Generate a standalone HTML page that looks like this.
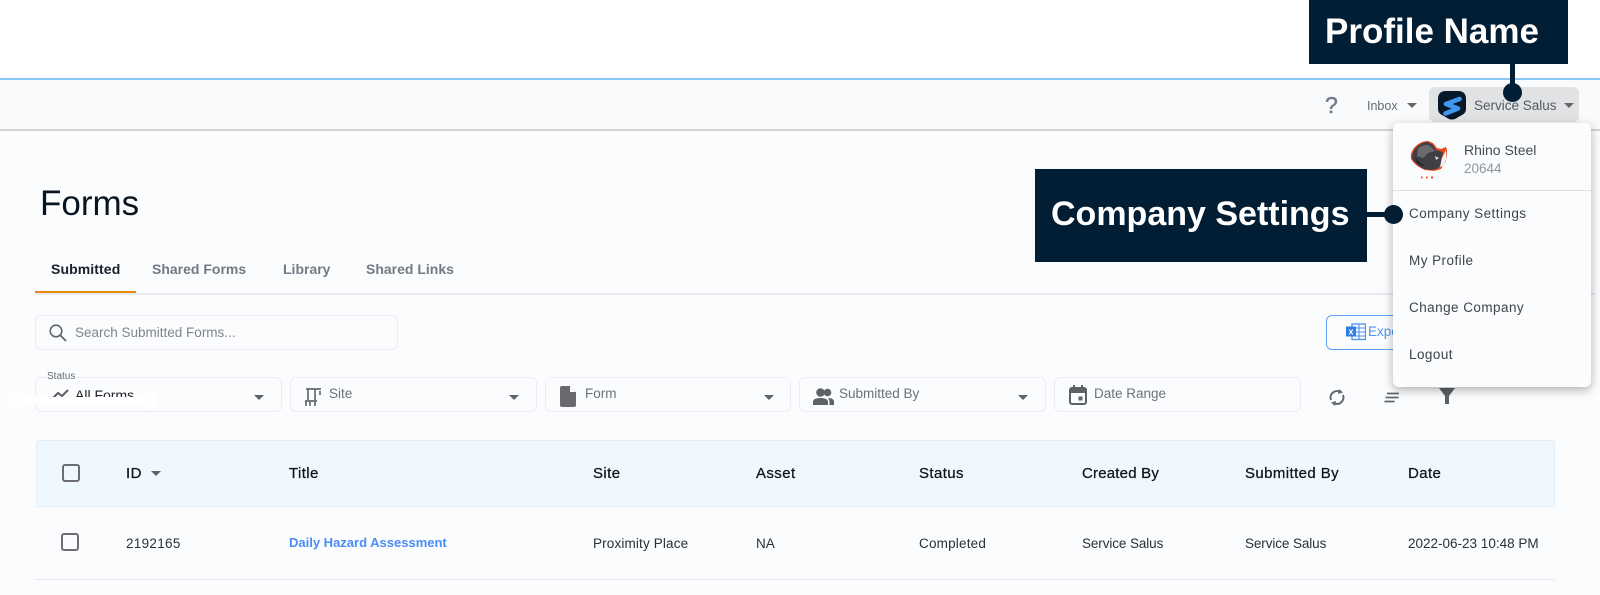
<!DOCTYPE html>
<html><head><meta charset="utf-8">
<style>
*{box-sizing:border-box;margin:0;padding:0}
html,body{width:1600px;height:595px;overflow:hidden;background:#fbfcfe;font-family:"Liberation Sans",sans-serif}
.a{position:absolute;white-space:nowrap}
.t{position:absolute;white-space:nowrap;line-height:20px;height:20px}
.box{position:absolute;border:1.5px solid #ebedf0;border-radius:6px;background:#fbfcfe}
.caret{position:absolute;width:0;height:0;border-left:5px solid transparent;border-right:5px solid transparent;border-top:5px solid #5f6368}
.f{font-size:13.5px;color:#6b7178}
.h{font-size:15px;color:#10151c;top:464px;letter-spacing:.4px;-webkit-text-stroke:.25px #10151c}
.r{font-size:13.5px;color:#2b3036;top:534px}
.m{font-size:13.5px;color:#3f4347;left:1409px;letter-spacing:.45px}
.cb{position:absolute;width:18px;height:18px;border:2px solid #6d6e73;border-radius:3px}
.cap{position:absolute;background:#021e34;color:#fff;font-weight:bold;line-height:1}
</style></head><body>
<div class="a" style="left:0;top:0;width:1600px;height:78px;background:#fff"></div>
<div class="a" style="left:0;top:78px;width:1600px;height:2px;background:#8cc6f2"></div>
<div class="a" style="left:0;top:80px;width:1600px;height:51px;background:#f9fafc;border-bottom:2px solid #d2d3d5"></div>

<div class="t" style="left:1325px;top:94px;font-size:23px;color:#6f7d8a;height:22px;line-height:22px;-webkit-text-stroke:.5px #6f7d8a">?</div>
<div class="t f" style="left:1367px;top:96px;font-size:12.5px;color:#666b70">Inbox</div>
<div class="caret" style="left:1407px;top:103px;border-top-color:#666"></div>
<div class="a" style="left:1429px;top:87px;width:150px;height:35px;background:#e1e2e4;border-radius:6px"></div>
<svg class="a" style="left:1437px;top:90px" width="30" height="30" viewBox="0 0 30 30"><path d="M9 1h12q8 0 8 8v10q0 4-4 6l-7 4q-3 1-6 0l-7-4q-4-2-4-6V9q0-8 8-8z" fill="#08182b"/><path d="M22.500 9L9 14l12 4.500L8.500 23.500" fill="none" stroke="#3f97ee" stroke-width="4.600" stroke-linejoin="round" stroke-linecap="round"/></svg>
<div class="t" style="left:1474px;top:96px;font-size:13.5px;color:#55595e">Service Salus</div>
<div class="caret" style="left:1564px;top:103px;border-top-color:#666"></div>

<div class="t" style="left:40px;top:184px;font-size:35px;color:#08141f;height:40px;line-height:40px">Forms</div>
<div class="t" style="left:51px;top:259px;font-size:14px;font-weight:bold;color:#17202c;letter-spacing:.1px">Submitted</div>
<div class="t" style="left:152px;top:259px;font-size:14px;font-weight:bold;color:#717b85">Shared Forms</div>
<div class="t" style="left:283px;top:259px;font-size:14px;font-weight:bold;color:#717b85">Library</div>
<div class="t" style="left:366px;top:259px;font-size:14px;font-weight:bold;color:#717b85">Shared Links</div>
<div class="a" style="left:35px;top:293px;width:1560px;height:2px;background:#e6e8eb"></div>
<div class="a" style="left:35px;top:291px;width:101px;height:2px;background:#e98a10"></div>

<div class="box" style="left:35px;top:315px;width:363px;height:35px"></div>
<svg class="a" style="left:48px;top:323px" width="20" height="20" viewBox="0 0 20 20"><circle cx="8" cy="8" r="5.800" fill="none" stroke="#62666b" stroke-width="1.600"/><path d="M12.300 12.300L18 18" stroke="#62666b" stroke-width="1.800"/></svg>
<div class="t f" style="left:75px;top:323px;color:#80858b">Search Submitted Forms...</div>

<div class="a" style="left:1326px;top:315px;width:90px;height:35px;border:1.5px solid #5ea3f5;border-radius:6px"></div>
<svg class="a" style="left:1346px;top:323px" width="20" height="18" viewBox="0 0 20 18"><rect x="6" y="1" width="13.500" height="15.500" fill="none" stroke="#4b94ee" stroke-width="1.300"/><path d="M6 5h13.500M6 9h13.500M6 13h13.500M13 1v15.500" stroke="#4b94ee" stroke-width="1.100"/><rect x="0" y="3.500" width="10" height="10" fill="#2f7fe0"/><text x="2.500" y="11.500" font-size="9" font-weight="bold" fill="#fff" font-family="Liberation Sans, sans-serif">x</text></svg>
<div class="t" style="left:1368px;top:322px;font-size:13.5px;color:#4f96f2">Export</div>

<!-- filters -->
<div class="box" style="left:35px;top:377px;width:247px;height:35px"></div>
<div class="t" style="left:46px;top:367px;font-size:10px;color:#666c72;background:#fbfcfe;padding:0 1px;height:12px;line-height:20px;overflow:visible">Status</div>
<svg class="a" style="left:52px;top:389px" width="20" height="12" viewBox="0 0 20 12"><path d="M1 9l5-5 4 3 6-6" fill="none" stroke="#5c6065" stroke-width="2"/></svg>
<div class="t f" style="left:75px;top:385px;color:#1d2227;font-size:14px">All Forms</div>
<div class="caret" style="left:254px;top:395px"></div>

<div class="box" style="left:290px;top:377px;width:247px;height:35px"></div>
<svg class="a" style="left:304px;top:387px" width="18" height="20" viewBox="0 0 18 20"><path d="M2 2h15M4 2v11M11 2v11M1 14h12M2 14v5M6 14v5M11 14v5M16 4v4" fill="none" stroke="#666a6f" stroke-width="1.700"/></svg>
<div class="t f" style="left:329px;top:384px">Site</div>
<div class="caret" style="left:509px;top:395px"></div>

<div class="box" style="left:545px;top:377px;width:246px;height:35px"></div>
<svg class="a" style="left:560px;top:386px" width="16" height="21" viewBox="0 0 16 21"><path d="M2 0h8l6 6v13q0 2-2 2H2q-2 0-2-2V2q0-2 2-2z" fill="#696a6e"/><path d="M10 0v6h6z" fill="#fbfcfe"/></svg>
<div class="t f" style="left:585px;top:384px">Form</div>
<div class="caret" style="left:764px;top:395px"></div>

<div class="box" style="left:799px;top:377px;width:247px;height:35px"></div>
<svg class="a" style="left:813px;top:388px" width="21" height="17" viewBox="0 0 21 17"><circle cx="7.500" cy="4.500" r="4.300" fill="#5e6267"/><circle cx="14.500" cy="4.500" r="3.800" fill="#5e6267"/><path d="M0 17v-3q0-4 7.500-4t7.500 4v3zM16.500 17v-3q0-2-1.500-4 6 0 6 4v3z" fill="#5e6267"/></svg>
<div class="t f" style="left:839px;top:384px">Submitted By</div>
<div class="caret" style="left:1018px;top:395px"></div>

<div class="box" style="left:1054px;top:377px;width:247px;height:35px"></div>
<svg class="a" style="left:1069px;top:385px" width="18" height="20" viewBox="0 0 18 20"><rect x="1" y="3" width="16" height="16" rx="2" fill="none" stroke="#5d6166" stroke-width="2"/><rect x="1" y="3" width="16" height="5" fill="#5d6166"/><path d="M5 0v4M13 0v4" stroke="#5d6166" stroke-width="2"/><rect x="9.500" y="11.500" width="4" height="4" fill="#5d6166"/></svg>
<div class="t f" style="left:1094px;top:384px">Date Range</div>

<svg class="a" style="left:1329px;top:389px" width="16" height="17" viewBox="0 0 16 17"><path d="M2 11A6.500 6.500 0 0 1 11 2.800M14 6A6.500 6.500 0 0 1 5 14.200" fill="none" stroke="#62666b" stroke-width="2"/><path d="M10 0l4 3.500-5 1.500zM6 17l-4-3.500 5-1.500z" fill="#62666b"/></svg>
<svg class="a" style="left:1384px;top:392px" width="16" height="11" viewBox="0 0 16 11"><path d="M3 1.500h12M1.500 5.500h13M.5 9.500h10" stroke="#62666b" stroke-width="1.700"/></svg>
<svg class="a" style="left:1439px;top:385px" width="16" height="19" viewBox="0 0 16 19"><path d="M0 3h16L10 11v8H6v-8z" fill="#5e6267"/></svg>

<!-- table -->
<div class="a" style="left:36px;top:440px;width:1519px;height:67px;background:#eff7ff;border:1px solid #e6edf3;border-radius:4px 4px 0 0"></div>
<div class="cb" style="left:62px;top:464px"></div>
<div class="t h" style="left:126px">ID</div>
<div class="caret" style="left:151px;top:471px"></div>
<div class="t h" style="left:289px">Title</div>
<div class="t h" style="left:593px">Site</div>
<div class="t h" style="left:756px">Asset</div>
<div class="t h" style="left:919px">Status</div>
<div class="t h" style="left:1082px;letter-spacing:.2px">Created By</div>
<div class="t h" style="left:1245px">Submitted By</div>
<div class="t h" style="left:1408px">Date</div>

<div class="cb" style="left:61px;top:533px"></div>
<div class="t r" style="left:126px;letter-spacing:.3px">2192165</div>
<div class="t r" style="left:289px;color:#4a8df5;font-weight:bold;font-size:13px;top:533px">Daily Hazard Assessment</div>
<div class="t r" style="left:593px;letter-spacing:.15px">Proximity Place</div>
<div class="t r" style="left:756px">NA</div>
<div class="t r" style="left:919px;letter-spacing:.2px">Completed</div>
<div class="t r" style="left:1082px;letter-spacing:-.1px">Service Salus</div>
<div class="t r" style="left:1245px;letter-spacing:-.1px">Service Salus</div>
<div class="t r" style="left:1408px">2022-06-23 10:48 PM</div>
<div class="a" style="left:36px;top:579px;width:1519px;height:1px;background:#e4e6e9"></div>

<!-- white artifact -->
<div class="a" style="left:16px;top:397px;width:134px;height:6px;background:#fff"></div>
<div class="a" style="left:7px;top:391px;width:18px;height:18px;border-radius:50%;background:#fff"></div>
<div class="a" style="left:140px;top:391px;width:18px;height:18px;border-radius:50%;background:#fff"></div>

<!-- menu -->
<div class="a" style="left:1393px;top:123px;width:198px;height:264px;background:#fbfcfe;border-radius:6px;box-shadow:0 3px 10px rgba(0,0,0,.3)"></div>
<svg class="a" style="left:1409px;top:139px" width="40" height="42" viewBox="0 0 40 42"><path d="M5 9Q11 2 19 2l5 2 4 5 4 1 5-2 1 3-1 11-5 8-7 2-9-1Q6 27 2 20 1 14 5 9z" fill="#e5491a"/><path d="M6 9.500Q12 3 19 3l5 3 3 5 4 1 3 2-2 7 0 5-4 4-6 1-7-1Q7 26 3 19.500 3 14 6 9.500z" fill="#3f4045"/><path d="M9 9q6-4 11-3l6 6-7 2-5 5-6-2z" fill="#6a6b71"/><path d="M6 18q4 6 11 9-6 0-9-3z" fill="#222327"/><path d="M33 19l4-8 0 10-3 6-3 1z" fill="#f2f2f2"/><path d="M26 17l4 2-3 2z" fill="#d9d9d9"/><path d="M12 38.500h1.500M17 38.500h1.500M22 38.500h2" stroke="#e5491a" stroke-width="2"/></svg>
<div class="t" style="left:1464px;top:140px;font-size:14px;color:#444a50">Rhino Steel</div>
<div class="t" style="left:1464px;top:159px;font-size:13.5px;color:#92969b">20644</div>
<div class="a" style="left:1393px;top:190px;width:198px;height:1px;background:#dfe0e2"></div>
<div class="t m" style="top:204px">Company Settings</div>
<div class="t m" style="top:251px">My Profile</div>
<div class="t m" style="top:298px">Change Company</div>
<div class="t m" style="top:345px">Logout</div>

<!-- callouts -->
<div class="cap" style="left:1309px;top:0;width:259px;height:64px"><span class="a" style="left:16px;top:14px;font-size:35px">Profile Name</span></div>
<div class="a" style="left:1510px;top:64px;width:5px;height:26px;background:#021e34"></div>
<div class="a" style="left:1503px;top:83px;width:19px;height:19px;border-radius:50%;background:#021e34"></div>
<div class="cap" style="left:1035px;top:169px;width:332px;height:93px"><span class="a" style="left:16px;top:28px;font-size:34px">Company Settings</span></div>
<div class="a" style="left:1367px;top:212px;width:20px;height:5px;background:#021e34"></div>
<div class="a" style="left:1384px;top:205px;width:19px;height:19px;border-radius:50%;background:#021e34"></div>
</body></html>
